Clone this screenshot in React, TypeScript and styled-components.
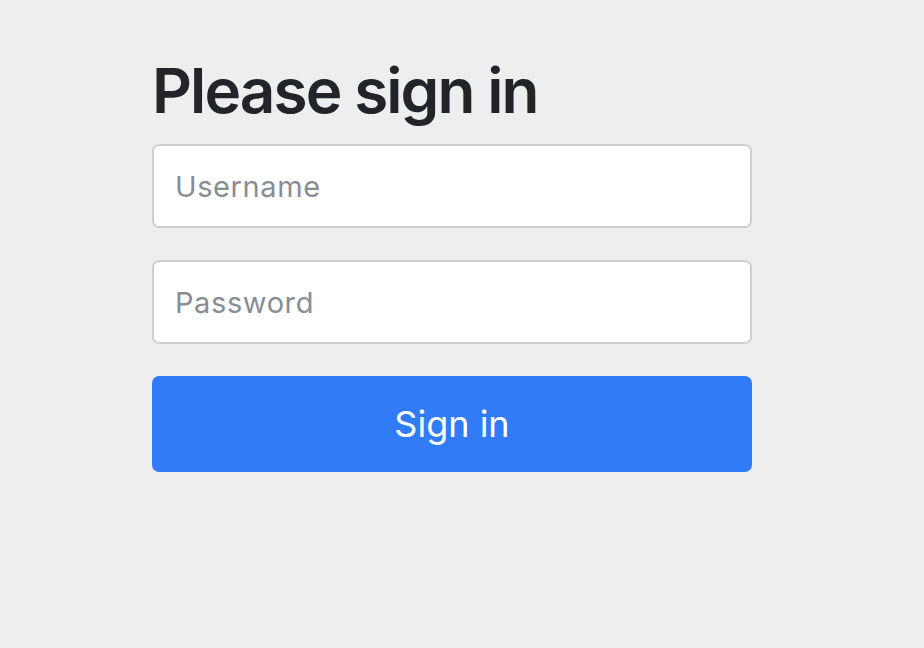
import React from "react";
import styled, { createGlobalStyle } from "styled-components";

const Global = createGlobalStyle`
  html, body { margin: 0; padding: 0; background: #eeeeee; }
  body { font-family: Inter, "Noto Sans", sans-serif; color: #212529; }
`;

const Page = styled.div`
  min-height: 648px;
  box-sizing: border-box;
  padding: 59px 0 0 152px;
`;

const Form = styled.form`
  width: 600px;
  display: flex;
  flex-direction: column;
`;

const Heading = styled.h2`
  margin: 0 0 21px 0;
  font-size: 62px;
  line-height: 64px;
  font-weight: 600;
  letter-spacing: -1.9px;
  color: #212529;
`;

const Input = styled.input`
  box-sizing: border-box;
  width: 100%;
  height: 84px;
  margin: 0 0 32px 0;
  padding: 0 21px;
  border: 2px solid #cfcfcf;
  border-radius: 7px;
  background: #ffffff;
  font-family: Inter, "Noto Sans", sans-serif;
  font-size: 29px;
  letter-spacing: 0.6px;
  color: #212529;
  outline: none;
  &::placeholder { color: #878d96; }
`;

const Button = styled.button`
  box-sizing: border-box;
  width: 100%;
  height: 96px;
  border: none;
  border-radius: 7px;
  background: #317cf6;
  color: #ffffff;
  font-family: Inter, "Noto Sans", sans-serif;
  font-size: 36px;
  font-weight: 400;
  cursor: pointer;
`;

export default function App() {
  return (
    <>
      <Global />
      <Page>
        <Form onSubmit={(e) => e.preventDefault()}>
          <Heading>Please sign in</Heading>
          <Input type="text" placeholder="Username" />
          <Input type="password" placeholder="Password" />
          <Button type="submit">Sign in</Button>
        </Form>
      </Page>
    </>
  );
}
